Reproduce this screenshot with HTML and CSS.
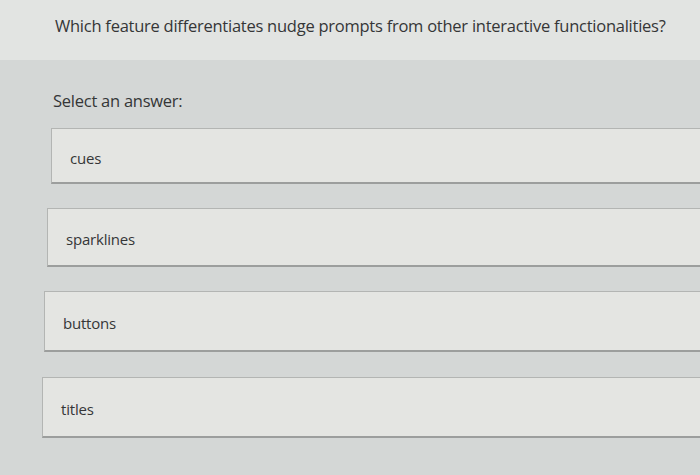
FILE: index.html
```html
<!DOCTYPE html>
<html lang="en">
<head>
  <meta charset="UTF-8" />
  <title>Question</title>
  <link rel="stylesheet" href="styles.css">
</head>
<body>
  <div class="question">
    <p>Which feature differentiates nudge prompts from other interactive functionalities?</p>
  </div>

  <div class="answers">
    <div class="prompt">Select an answer:</div>
    <div class="option">cues</div>
    <div class="option">sparklines</div>
    <div class="option">buttons</div>
    <div class="option">titles</div>
  </div>
</body>
</html>
```

FILE: styles.css
```css
body {
  margin: 0;
  font-family: "Open Sans", "Noto Sans", sans-serif;
  color: #353637;
  background: #d4d7d6;
  overflow: hidden;
}

.question {
  background: #e2e4e2;
  height: 60px;
  padding: 0 0 0 55px;
  box-sizing: border-box;
}

.question p {
  margin: 0;
  padding-top: 14px;
  font-size: 16.5px;
  letter-spacing: -0.25px;
}

.answers {
  padding-top: 29px;
}

.prompt {
  font-size: 16.5px;
  margin-left: 53px;
  letter-spacing: -0.25px;
  margin-bottom: 16px;
}

.option {
  background: #e4e5e2;
  border: 1px solid #b3b5b3;
  border-bottom: 2px solid #9c9e9d;
  border-right: none;
  font-size: 15px;
  letter-spacing: -0.2px;
  display: flex;
  align-items: center;
  padding: 4px 0 0 18px;
  margin-bottom: 24px;
  box-sizing: border-box;
}

.option:nth-child(2) {
  margin-left: 51px;
  height: 56px;
}

.option:nth-child(3) {
  margin-left: 47px;
  height: 59px;
}

.option:nth-child(4) {
  margin-left: 44px;
  height: 61px;
  margin-bottom: 25px;
}

.option:nth-child(5) {
  margin-left: 42px;
  height: 61px;
}
```
